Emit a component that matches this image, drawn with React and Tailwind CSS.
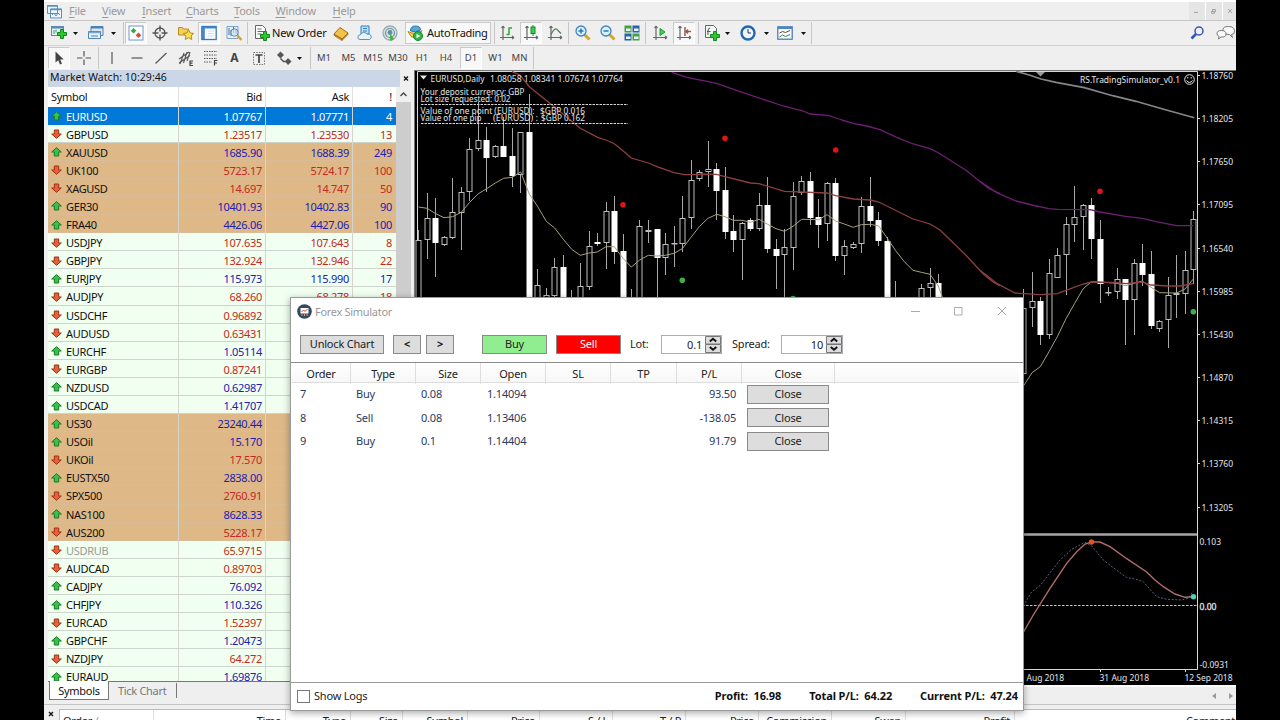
import React from "react";

const U = "#2020b0";
const D = "#c22a22";
// symbol, bid, ask, spread, direction, highlighted row
const quotes = [
  ["EURUSD", "1.07767", "1.07771", "4", 1, "sel"],
  ["GBPUSD", "1.23517", "1.23530", "13", 0, ""],
  ["XAUUSD", "1685.90", "1688.39", "249", 1, "tan"],
  ["UK100", "5723.17", "5724.17", "100", 0, "tan"],
  ["XAGUSD", "14.697", "14.747", "50", 0, "tan"],
  ["GER30", "10401.93", "10402.83", "90", 1, "tan"],
  ["FRA40", "4426.06", "4427.06", "100", 1, "tan"],
  ["USDJPY", "107.635", "107.643", "8", 0, ""],
  ["GBPJPY", "132.924", "132.946", "22", 0, ""],
  ["EURJPY", "115.973", "115.990", "17", 1, ""],
  ["AUDJPY", "68.260", "68.278", "18", 0, ""],
  ["USDCHF", "0.96892", "", "", 0, ""],
  ["AUDUSD", "0.63431", "", "", 0, ""],
  ["EURCHF", "1.05114", "", "", 1, ""],
  ["EURGBP", "0.87241", "", "", 0, ""],
  ["NZDUSD", "0.62987", "", "", 1, ""],
  ["USDCAD", "1.41707", "", "", 1, ""],
  ["US30", "23240.44", "", "", 1, "tan"],
  ["USOil", "15.170", "", "", 1, "tan"],
  ["UKOil", "17.570", "", "", 0, "tan"],
  ["EUSTX50", "2838.00", "", "", 1, "tan"],
  ["SPX500", "2760.91", "", "", 0, "tan"],
  ["NAS100", "8628.33", "", "", 1, "tan"],
  ["AUS200", "5228.17", "", "", 0, "tan"],
  ["USDRUB", "65.9715", "", "", 0, "off"],
  ["AUDCAD", "0.89703", "", "", 0, ""],
  ["CADJPY", "76.092", "", "", 1, ""],
  ["CHFJPY", "110.326", "", "", 1, ""],
  ["EURCAD", "1.52397", "", "", 0, ""],
  ["GBPCHF", "1.20473", "", "", 1, ""],
  ["NZDJPY", "64.272", "", "", 0, ""],
  ["EURAUD", "1.69876", "", "", 1, ""],
];

// Each pane is sampled at three units per pixel: [x, high, low, top, bottom, filled]
const panes = [
  { ox: 416, oy: 70, c: [
    [8,480,690,510,690,0],[33,368,568,444,511,0],[59,385,620,444,520,1],[84,498,528,502,524,0],[110,323,506,426,503,0],[136,350,540,366,428,0],
    [161,205,393,238,366,0],[187,95,243,210,238,0],[212,170,366,210,264,1],[238,225,264,229,260,0],[263,140,258,229,260,1],[289,173,350,258,317,1],
    [314,185,368,185,316,0],[340,72,690,185,690,1],[365,596,690,645,690,0],[391,655,690,676,690,0],[416,563,682,591,678,0],[442,556,690,590,690,1],
    [467,660,690,689,690,0],[493,580,690,649,690,0],[519,484,660,528,650,0],[544,489,528,516,521,1],[570,396,596,424,520,0],[595,378,581,424,545,1],
    [621,491,690,543,690,1],[646,657,690,689,690,0],[671,450,690,468,690,0],[697,450,520,479,486,0],[723,478,690,478,564,1],[748,488,614,523,564,0],
    [774,468,592,519,523,0],[799,378,545,445,521,0],[825,270,476,330,445,0],[850,300,332,306,328,0],[876,214,352,296,307,0]] },
  { ox: 700, oy: 120, c: [
    [50,128,301,147,212,1],[75,141,358,211,336,1],[100,285,396,334,361,1],[126,305,480,310,361,0],[151,295,332,301,328,1],[177,218,334,255,328,0],
    [203,170,398,255,386,1],[228,358,508,386,407,1],[254,328,540,382,406,0],[279,185,450,229,383,0],[305,168,226,184,220,0],[330,156,316,183,293,1],
    [356,237,384,291,315,1],[381,186,363,188,313,0],[407,174,423,188,408,1],[433,360,465,379,408,0],[460,366,388,373,385,0],[484,232,399,259,373,0],
    [511,170,320,259,302,1],[536,277,378,300,363,1],[562,352,540,362,540,1],[587,484,540,539,540,0],[664,491,540,503,540,0],[690,443,540,489,503,0],
    [715,463,540,489,540,1]] },
  { ox: 980, oy: 160, c: [
    [131,387,655,445,643,0],[156,336,500,423,445,0],[181,411,555,423,526,1],[207,296,536,340,526,0],[232,264,355,286,355,0],[258,170,404,193,286,0],
    [284,78,245,172,195,0],[309,132,270,136,172,0],[334,114,296,136,238,1],[360,180,428,237,373,1],[386,382,408,395,399,0],[411,323,417,358,395,0],
    [437,356,554,357,421,1],[462,296,524,310,421,0],[487,252,378,310,344,1],[513,273,506,343,498,1],[539,480,515,482,508,0],[565,351,563,406,481,0],
    [590,285,474,400,406,0],[615,273,462,331,401,0],[640,153,372,178,331,0]] },
];

const curves = [
  [416, 70, "#a89f7c", 1, "8,411 33,415 59,431 84,443 110,440 136,427 161,397 187,371 212,356 238,339 263,325 289,322 314,306 340,372 365,410 391,454 416,474 442,508 467,538 493,556 519,549 544,546 570,530 595,530 621,565 646,591 671,570 697,556 723,558 748,556 774,550 799,536 825,502 850,470 876,445 902,433"],
  [700, 120, "#a89f7c", 1, "50,283 75,290 100,301 126,301 151,307 177,298 203,313 228,326 254,334 279,319 305,298 356,299 381,284 407,303 433,312 460,322 484,314 511,313 536,318 562,355 587,392 613,425 639,451 664,457 690,463 715,498 728,534"],
  [980, 160, "#a89f7c", 1, "131,677 156,638 181,620 207,575 232,530 258,476 284,430 309,387 334,365 360,366 411,370 437,377 462,370 487,363 513,382 539,398 590,399 615,387 640,357"],
  [416, 70, "#8f3f42", 1.3, "288,5 312,15 340,50 420,115 493,175 545,202 570,210 595,221 621,242 646,264 697,279 723,290 774,308 805,314 876,314"],
  [700, 120, "#8f3f42", 1.3, "0,162 50,163 75,170 151,189 177,191 254,214 381,219 407,227 460,237 511,240 536,246 639,297 690,312 720,330 800,408 850,462 880,487 900,497"],
  [980, 160, "#8f3f42", 1.3, "0,331 50,370 105,399 181,404 232,401 258,391 309,372 334,366 411,368 437,371 487,366 513,375 565,378 600,378 640,371"],
  [440, 0, "#6e1f74", 1.3, "695,217 740,232 830,250 900,275 1030,318 1090,333 1110,342 1165,346 1206,360"],
  [700, 120, "#6e1f74", 1.3, "425,0 460,10 500,18 540,29 590,52 640,72 690,86 715,98 800,152 865,205 900,221"],
  [980, 160, "#6e1f74", 1.3, "0,64 50,98 105,122 155,135 207,146 232,148 330,149 360,156 437,169 487,175 539,187 590,197 640,197"],
  [836, 0, "#85858c", 1.7, "540,214 580,225 615,237 660,247 745,263 830,287 900,304 980,327 1075,353"],
];

const scaled = (ox, oy, pts) =>
  pts.split(" ").map((p) => {
    const [x, y] = p.split(",").map(Number);
    return (ox + x / 3).toFixed(1) + "," + (oy + y / 3).toFixed(1);
  }).join(" ");

function Candles() {
  return panes.flatMap(({ ox, oy, c }) =>
    c.map(([x, h, l, t, b, f]) => {
      const cx = Math.floor(ox + x / 3) + 0.5;
      const Y = (v) => Math.round(oy + v / 3);
      const bt = Y(t), bb = Math.max(Y(b), Y(t) + 1);
      return (
        <g key={ox + "-" + x}>
          <path d={`M${cx} ${Y(h)}V${bt}M${cx} ${bb}V${Math.max(Y(l), bb)}`} stroke="#a9a9a9" />
          {f ? <rect x={cx - 3} y={bt} width="6" height={bb - bt} fill="#fff" />
            : <rect x={cx - 2.5} y={bt + 0.5} width="5" height={Math.max(bb - bt - 1, 0.5)} fill="#000" stroke="#bdbdbd" />}
        </g>
      );
    })
  );
}

const Tx = ({ x, y, w, children, ...p }) => (
  <text x={x} y={y} textLength={w} lengthAdjust="spacingAndGlyphs" {...p}>{children}</text>
);

function Chart() {
  const prices = ["1.18760", "1.18205", "1.17650", "1.17095", "1.16540", "1.15985", "1.15430", "1.14870", "1.14315", "1.13760", "1.13205"];
  return (
    <svg className="block h-[615px] w-[822px] shrink-0 bg-black" viewBox="414 70 822 615" fontFamily="'Noto Sans', sans-serif" fontSize="9.8" fill="none">
      <path d="M414.5 70V685M414 70.5H1236" stroke="#777" />
      <path d="M417.5 669V71.5H1197.5V669.5H417" stroke="#d8d8d8" />
      <Candles />
      {curves.map(([ox, oy, s, w, p], i) => (
        <polyline key={i} points={scaled(ox, oy, p)} stroke={s} strokeWidth={w} />
      ))}
      <path d="M1036 72H1045L1040.500 76.500Z" fill="#999" />
      {[[623, 204.7], [725, 138.2], [835.7, 150], [1100, 191.3]].map(([x, y]) => <circle key={x} cx={x} cy={y} r="2.8" fill="#dc1616" />)}
      {[[682.3, 280.3], [793, 298.5], [1193.300, 311.7]].map(([x, y]) => <circle key={x} cx={x} cy={y} r="2.8" fill="#3fae49" />)}
      <path d="M1018 534.500H1197" stroke="#a6a6a6" strokeWidth="2.5" />
      <path d="M1018 605.500H1197" stroke="#c5c5c5" strokeDasharray="2.5 1.5" />
      <polyline points={scaled(1000, 500, "70,318 95,275 120,257 180,180 215,148 255,127 275,138 310,180 345,207 380,233 405,237 430,245 470,290 500,298 545,300 565,295 580,272")} stroke="#5b607c" strokeDasharray="2 1.6" />
      <polyline points={scaled(1000, 500, "70,397 100,345 150,265 200,190 230,155 255,132 275,126 300,126 330,140 380,176 440,216 465,240 490,260 525,282 555,292 580,290")} stroke="#b06d6c" strokeWidth="1.4" />
      <circle cx="1091.500" cy="542" r="2.7" fill="#e8511c" />
      <circle cx="1193.500" cy="596.700" r="2.700" fill="#4fd3b5" />
      <g fill="#e6e6e6">
        <path d="M420 75.500H427L423.500 79.500Z" />
        <Tx x={430.500} y={81.500} w={54}>EURUSD,Daily</Tx>
        <Tx x={490} y={81.500} w={133}>1.08058 1.08341 1.07674 1.07764</Tx>
        <Tx x={420.500} y={95} w={104}>Your deposit currency: GBP</Tx>
        <Tx x={420.500} y={101.500} w={90}>Lot size requested: 0.02</Tx>
        <Tx x={420.500} y={114} w={114}>Value of one point (EURUSD):</Tx>
        <Tx x={540} y={114} w={45}>$GBP 0.016</Tx>
        <Tx x={420.500} y={120.500} w={61}>Value of one pip</Tx>
        <Tx x={493} y={120.500} w={45}>(EURUSD) :</Tx>
        <Tx x={541} y={120.500} w={44}>$GBP 0.162</Tx>
        <Tx x={1080} y={82.500} w={100}>RS.TradingSimulator_v0.1</Tx>
        {prices.map((p, i) => <Tx key={p} x={1201.500} y={79 + i * 43.15} w={31.500}>{p}</Tx>)}
        <Tx x={1199.500} y={544.500} w={21.500}>0.103</Tx>
        <Tx x={1199.500} y={609.500} w={17} stroke="#e6e6e6" strokeWidth=".3">0.00</Tx>
        <Tx x={1199.500} y={667.500} w={29.500}>-0.0931</Tx>
        <Tx x={1026.500} y={680.500} w={37.500}>Aug 2018</Tx>
        <Tx x={1099.500} y={680.500} w={49.500}>31 Aug 2018</Tx>
        <Tx x={1184.500} y={680.500} w={48}>12 Sep 2018</Tx>
      </g>
      <path d="M421 104.500H628M421 123.500H628" stroke="#d4d4d4" strokeDasharray="2.500 1" />
      <path d={prices.map((_, i) => `M1198 ${Math.round(75 + i * 43.15) + 0.5}h2`).join("") + "M1100.500 670v2M1185.500 670v2"} stroke="#d8d8d8" />
      <g stroke="#e6e6e6"><circle cx="1189.500" cy="79.500" r="4.800" /><path d="M1186.500 80.500Q1189.500 84.500 1192.500 80.500M1187.800 77v1.500M1191.200 77v1.500" /></g>
    </svg>
  );
}

const Svg = ({ children, s = 16 }) => <svg width={s} height={s} viewBox="0 0 16 16" fill="none" className="shrink-0">{children}</svg>;
const Plus = ({ x = 6, y = 5 }) => <path transform={`translate(${x} ${y})`} d="M3.500 .5h3v3h3v3h-3v3h-3v-3h-3v-3h3z" fill="#2fc72f" stroke="#118a1a" />;
const AxesPath = () => <path d="M4 1v14M1 12.500h14M4 1 2.500 3M4 1l1.500 2M15 12.500l-2-1.500M15 12.500l-2 1.500" stroke="#666" strokeWidth="1.200" />;

const icons = {
  newChart: <Svg><rect x=".5" y="1.500" width="12" height="9" fill="#e4effa" stroke="#5a8ab8" /><path d="M.5 2.500h12" stroke="#5a8ab8" strokeWidth="2" /><path d="M3 5v4M5 4.500v3" stroke="#39a845" /><Plus x={6} y={4} /></Svg>,
  profiles: <Svg><path d="M3 1.500h12v9H3z" fill="#d7e7f6" stroke="#4f83b5" /><path d="M3 2.500h12" stroke="#4f83b5" strokeWidth="2" /><path d="M.5 6.500h12v7H.5z" fill="#e7f1fa" stroke="#4f83b5" /><path d="M.5 7.500h12M3 11h7" stroke="#7aa5cf" strokeWidth="1.500" /></Svg>,
  market: <Svg><rect x="1" y="1" width="14" height="14" fill="#fff" stroke="#6b9bcb" /><path d="M5.500 3 8.300 5.800 5.500 8.600 2.700 5.800Z" fill="#2fae3a" /><path d="M10.500 7.500 13.300 10.300 10.500 13.100 7.700 10.300Z" fill="#db4a32" /></Svg>,
  target: <Svg><circle cx="8" cy="8" r="5" stroke="#555" strokeWidth="1.300" /><path d="M8 .5v6M8 9.500v6M.5 8h6M9.500 8h6" stroke="#555" strokeWidth="1.400" /></Svg>,
  folderStar: <Svg><path d="M.5 2.500h4l1 1.500h5v6H.5z" fill="#f4cf60" stroke="#bd8b1d" /><path d="m10.500 4.500 1.700 3.500 3.500.4-2.600 2.500.7 3.600-3.300-1.800-3.200 1.800.6-3.600L5.200 8.400 9 8z" fill="#fbe14a" stroke="#b98b14" /></Svg>,
  navigator: <Svg><rect x=".8" y="1.500" width="14.400" height="13" fill="#fafdff" stroke="#3c78bd" strokeWidth="1.300" /><path d="M1 2h14v1.500H1zM1 3h2.800v11H1z" fill="#4685c9" /><path d="M7 6h6M7 8.500h6M7 11h6" stroke="#d5dfeb" /></Svg>,
  tester: <Svg><path d="M1 1.500h11v12H1z" fill="#e6f0fa" stroke="#7da3c8" /><path d="M3 3v7M5 5v6M7.500 2v6M10 4v5" stroke="#4377b0" /><circle cx="8.500" cy="7.500" r="3.700" fill="#cfe5f5aa" stroke="#6688a4" /><path d="m11.500 10.500 4 4.500" stroke="#d4a52a" strokeWidth="2.400" /></Svg>,
  order: <Svg><path d="M1.500.5h7l3 3v10h-10z" fill="#fff" stroke="#666" /><path d="M3.500 4h4M3.500 6.500h6M3.500 9h4" stroke="#666" /><Plus x={6} y={6} /></Svg>,
  book: <Svg><path d="m1 9 6-6.500 8 5.500-6 6z" fill="#f2c24a" stroke="#a36a12" /><path d="m1 9 8 5v1.500L1 10.500zM9 14l6-6v1.500l-6 6z" fill="#d18a1d" stroke="#9b6514" strokeWidth=".6" /></Svg>,
  server: <Svg><path d="M4 1h8v8H4z" fill="#bfe0f8" stroke="#2f7ec4" /><path d="M6 3.500h4M6 6h4" stroke="#2f7ec4" /><path d="M3 14.500a2.300 2.300 0 0 1 .3-4.600 4 4 0 0 1 7-.6 2.800 2.800 0 1 1 2.200 5.200z" fill="#e8f2fa" stroke="#5b8fc4" /></Svg>,
  radar: <Svg><circle cx="8" cy="8" r="7" stroke="#9ab0b4" strokeWidth="1.300" fill="#d5dfe0" /><circle cx="8" cy="8" r="4.500" stroke="#79969b" strokeWidth="1.200" /><circle cx="8" cy="7.500" r="2.400" fill="#5c8fae" /><path d="M8 8v8a7.500 7.500 0 0 0 4-2z" fill="#45b24e" /></Svg>,
  auto: <Svg><path d="M1 6.500q7 4 14-1l-3 6q-4 3-8 0z" fill="#f3cb4c" stroke="#b88b1d" /><path d="M3.500 6q0-5 5-5t5 4q-5 3-10 1z" fill="#58a9d8" stroke="#2b79aa" /><circle cx="11" cy="11" r="4.500" fill="#2eb544" stroke="#14882a" /><path d="m9.500 8.800 3.800 2.200-3.800 2.200z" fill="#fff" /></Svg>,
  bars: <Svg><AxesPath /><path d="M10 2.500v7.500M10 3h3M7.500 9.500H10" stroke="#2ca83a" strokeWidth="1.500" /></Svg>,
  candle: <Svg><AxesPath /><path d="M10 0v11" stroke="#178a28" /><rect x="8" y="2" width="4" height="6.500" fill="#37d04b" stroke="#178a28" /></Svg>,
  line: <Svg><AxesPath /><path d="M4 9.500Q8 1 11 5.500L14 8.500" stroke="#4c7c55" strokeWidth="1.200" /></Svg>,
  zoomIn: <Svg><path d="m9.500 9.500 5 5" stroke="#d6a62b" strokeWidth="3" /><circle cx="6" cy="6" r="5" fill="#d8effc" stroke="#3b86c6" strokeWidth="1.300" /><path d="M3.500 6h5M6 3.500v5" stroke="#2f73b5" strokeWidth="1.500" /></Svg>,
  zoomOut: <Svg><path d="m9.500 9.500 5 5" stroke="#d6a62b" strokeWidth="3" /><circle cx="6" cy="6" r="5" fill="#d8effc" stroke="#3b86c6" strokeWidth="1.300" /><path d="M3.500 6h5" stroke="#2f73b5" strokeWidth="1.500" /></Svg>,
  tiles: <Svg><path d="M.5.500h7v7h-7zM8.500 8.500h7v7h-7z" fill="#43a047" /><path d="M8.500.500h7v7h-7zM.5 8.500h7v7h-7z" fill="#2b62ae" /><path d="M2 3.500h4.500v2.500H2zM10 3.500h4.500v2.500H10zM2 11.500h4.500V14H2zM10 11.500h4.500V14H10z" fill="#e8f4f4" /></Svg>,
  scroll: <Svg><AxesPath /><path d="m8 3.500 5 3.500-5 3.500z" fill="#45d052" stroke="#1c9a2d" /></Svg>,
  shift: <Svg><AxesPath /><path d="M9 2v9" stroke="#555" strokeWidth="1.300" /><path d="M15 6.500h-5M12 4.500l-2 2 2 2" stroke="#bf4b28" strokeWidth="1.400" /></Svg>,
  indicators: <Svg><path d="M1.500.5h8l3 3v9h-11z" fill="#f2f6f2" stroke="#666" /><path d="M6 3q-2 0-2 3v4M3 6.500h3.500" stroke="#555" /><Plus x={6} y={6} /></Svg>,
  clock: <Svg><circle cx="8" cy="8" r="6.500" fill="#eef6fd" stroke="#2566b0" strokeWidth="2.400" /><path d="M8 4v4h3" stroke="#334" /></Svg>,
  template: <Svg><rect x=".8" y="1.800" width="14.400" height="12.400" fill="#f8fbff" stroke="#3c74b2" strokeWidth="1.200" /><path d="M1 3h14" stroke="#4c86c6" strokeWidth="2" /><path d="m2.500 8 3-1.500 3 1 4.500-2" stroke="#7a4434" /><path d="m2.500 12 3-2 3 1.500 4.500-2" stroke="#3a8a48" /></Svg>,
  search: <Svg><circle cx="10" cy="6" r="4" fill="#eef2fc" stroke="#3556b4" strokeWidth="1.500" /><path d="m7 9-4.500 4.500" stroke="#3556b4" strokeWidth="2.600" /></Svg>,
  cursor: <Svg><path d="M4.500 1.500v11l2.700-2.300 1.800 4.300 2-.9-1.900-4.100h3.600z" fill="#444" /></Svg>,
  cross: <Svg><path d="M8 1v5.500M8 9.500V15M1 8h5.500M9.500 8H15" stroke="#555" strokeWidth="1.200" /></Svg>,
  vline: <Svg><path d="M8 2v12" stroke="#555" strokeWidth="1.200" /></Svg>,
  hline: <Svg><path d="M2.500 8h11" stroke="#555" strokeWidth="1.200" /></Svg>,
  trend: <Svg><path d="M2.500 13.500l11-10.500" stroke="#555" strokeWidth="1.200" /></Svg>,
  channel: <Svg><path d="M1 9 11 2M1 13 12 5.500M2 14 6 3M5.500 13 9 2M9 11l3-9" stroke="#555" strokeWidth="1.100" /><path d="M15 11h-3v4.500h3M12 13.200h2.500" stroke="#444" strokeWidth="1.200" /></Svg>,
  fibo: <Svg><path d="M1 1.500h13M1 5h13M1 8.500h13M1 12h8" stroke="#555" strokeDasharray="1.500 1" /><path d="M14.500 10.500h-3v5M11.500 13h2.500" stroke="#444" strokeWidth="1.200" /></Svg>,
  label: <Svg><rect x="2.500" y="2.500" width="11" height="12" stroke="#777" strokeDasharray="1.500 1.200" /><path d="M4.500 5h7M8 5v8" stroke="#444" strokeWidth="1.700" /></Svg>,
  arrows: <Svg><path d="M4.500 1.500 8 5 4.500 8.500 1 5z" fill="#555" /><path d="m4.500 8.500 3 3h3" stroke="#555" strokeWidth="1.500" /><path d="M12 8l3.500 3.500L12 15l-3-3.500z" fill="#555" /></Svg>,
};

const Cell = ({ w, n, on, children }) => (
  <div className={`${w} flex shrink-0 items-center justify-center ${on ? "h-[22px] border border-[#c9c9c9] border-r-white border-b-white bg-[#f8f8f8]" : "h-full"}`}>{n ? icons[n] : children}</div>
);
const Caret = ({ w }) => (
  <div className={`${w} flex shrink-0 justify-center`}><svg width="5" height="3" viewBox="0 0 5 3" className="shrink-0"><path d="M0 0h5L2.500 3z" fill="#111" /></svg></div>
);
const Sep = () => <div className="h-[22px] w-px shrink-0 bg-[#c6c6c6]" />;

function Toolbars() {
  return (
    <>
      <div className="flex h-[25px] items-center border-b border-[#d2d2d2] pl-[4px] text-[11px] text-[#111]">
        <Cell w="w-[22px]" n="newChart" /><Caret w="w-[11px]" /><Cell w="w-[29px]" n="profiles" /><Caret w="w-[6px]" />
        <div className="w-[7px]" /><Sep /><div className="w-px" /><Cell w="w-[22px]" n="market" on /><Cell w="w-[26px]" n="target" /><Cell w="w-[25px]" n="folderStar" />
        <Cell w="w-[22px]" n="navigator" on /><Cell w="w-[27px]" n="tester" /><Sep /><div className="w-[4px]" />
        <Cell w="w-[20px]" n="order" /><span className="w-[58px] shrink-0 whitespace-nowrap tracking-[-0.2px]">New Order</span>
        <Cell w="w-[22px]" n="book" /><Cell w="w-[26px]" n="server" /><Cell w="w-[24px]" n="radar" /><div className="w-[3px]" />
        <div className="flex h-[22px] w-[86px] shrink-0 items-center gap-[4px] border border-[#c9c9c9] bg-[#f8f8f8] pl-[1px]">{icons.auto}<span className="whitespace-nowrap tracking-[-0.28px]">AutoTrading</span></div>
        <div className="w-[3px]" /><Sep /><Cell w="w-[24px]" n="bars" /><div className="w-px" /><Cell w="w-[22px]" n="candle" on /><Cell w="w-[26px]" n="line" /><Sep />
        <Cell w="w-[27px]" n="zoomIn" /><Cell w="w-[23px]" n="zoomOut" /><Cell w="w-[25px]" n="tiles" /><div className="w-px" /><Sep /><div className="w-px" /><Cell w="w-[26px]" n="scroll" />
        <Cell w="w-[22px]" n="shift" on /><div className="w-[3px]" /><Sep /><Cell w="w-[25px]" n="indicators" /><Caret w="w-[7px]" />
        <Cell w="w-[34px]" n="clock" /><Caret w="w-[2px]" /><Cell w="w-[36px]" n="template" /><Caret w="w-[1px]" /><div className="w-[7px]" /><Sep />
        <div className="ml-auto flex w-[47px] shrink-0 items-center gap-[11px]">
          {icons.search}
          <svg width="20" height="16" viewBox="0 0 20 16" fill="#fafafa" stroke="#777" className="shrink-0"><path d="M7 4.500Q7 1.500 12.500 1.500T18.500 5.500 15.500 9.500l1 3-3-3Q7 9.500 7 4.500Z" /><path d="M1 8.500Q1 5.500 5.500 5.500T10 9t-5 3l-2.500 2 .5-2.500Q1 10.500 1 8.500Z" /></svg>
        </div>
      </div>
      <div className="flex h-[24px] items-center pl-[4px] text-[9.500px] text-[#444]">
        <Cell w="w-[22px]" n="cursor" on /><Cell w="w-[28px]" n="cross" /><Sep /><Cell w="w-[25px]" n="vline" /><Cell w="w-[25px]" n="hline" />
        <Cell w="w-[24px]" n="trend" /><Cell w="w-[25px]" n="channel" /><Cell w="w-[25px]" n="fibo" /><Cell w="w-[23px]"><b className="text-[12px] text-[#444]">A</b></Cell>
        <Cell w="w-[25px]" n="label" /><Cell w="w-[26px]" n="arrows" /><Caret w="w-[5px]" /><div className="w-[8px]" /><Sep />
        <Cell w="w-[26px]">M1</Cell><Cell w="w-[23px]">M5</Cell><Cell w="w-[26px]">M15</Cell><Cell w="w-[24px]">M30</Cell><Cell w="w-[24px]">H1</Cell>
        <Cell w="w-[24px]">H4</Cell><div className="w-[2px]" /><Cell w="w-[22px]" on>D1</Cell><Cell w="w-[27px]">W1</Cell><Cell w="w-[21px]">MN</Cell><div className="w-[3px]" /><Sep />
      </div>
    </>
  );
}

const Arrow = ({ up }) => (
  <svg width="11" height="10" viewBox="0 0 11 10" className="shrink-0">
    <path d={up ? "M5.500.700 10.300 5H7.700V9H3.300V5H.7Z" : "M5.500 9.300 10.300 5H7.700V1H3.300V5H.7Z"} fill={up ? "#38c048" : "#ea5f35"} stroke={up ? "#187a28" : "#9c3318"} />
  </svg>
);

const cols = "grid grid-cols-[131px_87px_87px_43px]";
function MarketWatch() {
  const tone = { sel: "bg-[#0078d7] border-[#0078d7]", tan: "bg-[#deb887] border-[#d9bb98]", "": "bg-[#f0fff0] border-[#ccd4cc]", off: "bg-[#f0fff0] border-[#ccd4cc]" };
  return (
    <div className="flex w-[370px] shrink-0 flex-col pl-[4px] text-[11px] tracking-[-0.3px] text-[#111]">
      <div className="flex h-[17px] w-[364px] items-center justify-between bg-[#cbd7e6] pb-px pl-[2px] text-[10.500px] tracking-[0.05px]"><span>Market Watch: 10:29:46</span>
        <svg width="12" height="17" viewBox="0 0 12 17" className="bg-[#efefef]"><path d="m4 6.500 4 4m0-4-4 4" stroke="#111" strokeWidth="1.300" /></svg></div>
      <div className="flex h-[594px] overflow-hidden">
        <div className="w-[348px] shrink-0">
          <div className={`${cols} h-[19.500px] bg-white leading-[19px]`}>
            <span className="border-r border-[#e0e0e0] pl-[3px]">Symbol</span><span className="border-r border-[#e0e0e0] pr-[3px] text-right">Bid</span>
            <span className="border-r border-[#e0e0e0] pr-[3px] text-right">Ask</span><span className="pr-[4px] text-right">!</span>
          </div>
          {quotes.map(([s, bid, ask, sp, up, t]) => {
            const c = t === "sel" ? "#fff" : up ? U : D;
            return (
              <div key={s} className={`${cols} h-[18.100px] border-b leading-[19px] ${tone[t]}`}>
                <span className="flex items-center gap-[4px] border-r border-[#d5d5cc] pl-[3px]"><Arrow up={up} /><span className={t === "sel" ? "text-white" : t === "off" ? "text-[#999]" : "text-[#111]"}>{s}</span></span>
                <span className="border-r border-[#d5d5cc] pr-[3px] text-right" style={{ color: c }}>{bid}</span>
                <span className="border-r border-[#d5d5cc] pr-[3px] text-right" style={{ color: c }}>{ask}</span>
                <span className="pr-[4px] text-right" style={{ color: c }}>{sp}</span>
              </div>
            );
          })}
        </div>
        <div className="w-[15px] bg-[#f0f0f0]"><svg width="15" height="15" viewBox="0 0 15 15" fill="none"><path d="m4.500 9 3-3 3 3" stroke="#444" strokeWidth="1.300" /></svg><div className="h-[360px] w-[15px] bg-[#cdcdcd]" /></div>
      </div>
      <div className="flex h-[23px] border-t border-[#777]">
        <div className="-mt-px ml-[1px] h-[19px] w-[60px] border border-t-0 border-[#777] bg-white text-center leading-[19px]">Symbols</div>
        <div className="mt-[1px] h-[15px] w-[68px] border-r border-[#777] pl-[9px] leading-[15px] text-[#777]">Tick Chart</div>
      </div>
    </div>
  );
}

const Btn = ({ cls, children }) => <button className={`${cls} flex h-[19px] shrink-0 items-center justify-center border border-[#8a8a8a]`}>{children}</button>;
const Spin = ({ w, v }) => (
  <div className={`${w} flex h-[19px] shrink-0 border border-[#abadb3] bg-white`}>
    <span className="flex-1 pr-[3px] text-right leading-[18px]">{v}</span>
    <svg width="16" height="17" viewBox="0 0 16 17"><path d="M.5.500h15v7.500h-15zM.5 8.500h15v8h-15z" fill="#ddd" stroke="#777" /><path d="M4.800 5.500 8 2.800l3.200 2.700M4.800 11 8 13.700l3.200-2.700" fill="none" stroke="#111" strokeWidth="2" /></svg>
  </div>
);

const grid = "grid grid-cols-[59px_65px_65px_65px_65px_66px_65px_93px_1fr]";
function Simulator() {
  const rows = [["7", "Buy", "0.08", "1.14094", "93.50"], ["8", "Sell", "0.08", "1.13406", "-138.05"], ["9", "Buy", "0.1", "1.14404", "91.79"]];
  return (
    <div className="absolute top-[297px] left-[290px] flex h-[414px] w-[734px] flex-col border border-[#9a9a9a] bg-white text-[11px] tracking-[-0.2px] text-[#222] shadow-[0_2px_7px_rgba(0,0,0,0.35)]">
      <div className="flex h-[28px] shrink-0 items-center pl-[6px] text-[#999]">
        <svg width="15" height="15" viewBox="0 0 15 15" className="mr-[3px] mb-px"><circle cx="7.500" cy="7.500" r="7.300" fill="#34495e" /><path d="M3.500 4h8v5.500h-8z" fill="#fff" /><path d="m4.500 8 2-2 1.500 1.500 2.500-2.500" stroke="#d8432b" fill="none" /><path d="M5 10v2M7.500 10v2M10 10v2" stroke="#dc9b72" /></svg>
        <span className="tracking-[-0.3px]">Forex Simulator</span>
        <svg width="100" height="12" viewBox="0 0 100 12" fill="none" stroke="#aaa" className="mr-[13px] mb-[2px] ml-auto"><path d="M1 6.500h9M44.500 2.500h7.500v7.500h-7.500zM88 2l8 8M96 2l-8 8" /></svg>
      </div>
      <div className="flex h-[37px] shrink-0 items-center border-b border-[#8a8a8a] pl-[9px] whitespace-nowrap">
        <Btn cls="w-[84px] bg-[#ddd]">Unlock Chart</Btn><Btn cls="ml-[9px] w-[28px] bg-[#ddd]"><b>&lt;</b></Btn><Btn cls="ml-[5px] w-[28px] bg-[#ddd]"><b>&gt;</b></Btn>
        <Btn cls="ml-[28px] w-[65px] bg-[#90ee90]">Buy</Btn><Btn cls="ml-[9px] w-[65px] bg-[#ff0000] text-white">Sell</Btn>
        <span className="ml-[9px] w-[31px] shrink-0">Lot:</span><Spin w="w-[61px]" v="0.1" />
        <span className="ml-[10px] w-[49px] shrink-0">Spread:</span><Spin w="w-[62px]" v="10" />
      </div>
      <div className="flex-1 pl-[1px]">
        <div className={`${grid} mr-[4px] h-[20px] border-b border-[#dcdcdc] bg-gradient-to-b from-white to-[#f7f7f7] text-center leading-[21px]`}>
          {["Order", "Type", "Size", "Open", "SL", "TP", "P/L", "Close"].map((h) => <span key={h} className="border-r border-[#dedede]">{h}</span>)}
        </div>
        {rows.map(([o, t, s, p, pl]) => (
          <div key={o} className={`${grid} h-[23.300px] items-center text-[#2c3a5e]`}>
            <span className="pl-[8px]">{o}</span><span className="pl-[5px]">{t}</span><span className="pl-[5px]">{s}</span><span className="pl-[6px]">{p}</span><span /><span />
            <span className="pr-[6px] text-right">{pl}</span><div className="pl-[5px] text-[#222]"><Btn cls="w-[82px] bg-[#ddd]">Close</Btn></div>
          </div>
        ))}
      </div>
      <div className="flex h-[28px] shrink-0 items-center border-t border-[#9a9a9a] pr-[5px] pl-[6px]">
        <div className="mr-[4px] h-[13px] w-[13px] border border-[#777] bg-white" /><span>Show Logs</span>
        <div className="ml-auto flex gap-[28px] font-bold tracking-[-0.1px] whitespace-nowrap text-[#111]"><span>Profit:&nbsp; 16.98</span><span>Total P/L:&nbsp; 64.22</span><span>Current P/L:&nbsp; 47.24</span></div>
      </div>
    </div>
  );
}

const Col = ({ w, children }) => <span className={`${w} shrink-0 border-r border-[#ddd] pr-[4px] text-right`}>{children}</span>;

export default function App() {
  return (
    <div className="relative h-[720px] w-[1280px] overflow-hidden bg-black px-[44px] font-['Noto_Sans',sans-serif]">
      <div className="flex h-[720px] w-[1192px] flex-col overflow-hidden border-t-2 border-white bg-[#efefef]">
        <div className="flex h-[19px] shrink-0 items-center border-b border-[#c6c6c6] pl-[3px] text-[11px] tracking-[-0.2px] text-[#999]">
          <svg width="15" height="15" viewBox="0 0 15 15" fill="#eef5fc" stroke="#5d8fc0" className="mr-[7px]"><path d="M.5 1.500h10v8H.5zM3.500 5h11v9h-11z" /><path d="M.5 2h10M3.500 5.500h11" strokeWidth="1.500" /><path d="m5 11 2-2 2 3 2-3 2 2" fill="none" /></svg>
          {[["File", "w-[33px]"], ["View", "w-[40px]"], ["Insert", "w-[44px]"], ["Charts", "w-[48px]"], ["Tools", "w-[41.500px]"], ["Window", "w-[57px]"], ["Help", "w-[40px]"]].map(([m, w]) => (
            <span key={m} className={`${w} shrink-0`}><u className="underline-offset-2">{m[0]}</u>{m.slice(1)}</span>
          ))}
          <div className="ml-auto flex h-full gap-px">
            {["M5.500 10.500h4", "M6 9.500h3v2H6zM7 9V7.500h3v2.500", "m5.500 7 4 4m0-4-4 4"].map((d) => (
              <svg key={d} width="17" height="18" viewBox="0 0 17 18" fill="none" stroke="#999" className="-mr-[1px] border-r border-white bg-[#e5e5e5] last:-mr-[4px]"><path d={d} /></svg>
            ))}
          </div>
        </div>
        <div className="shrink-0"><Toolbars /></div>
        <div className="flex h-[634px] shrink-0">
          <MarketWatch />
          <div className="flex w-[822px] flex-col">
            <Chart />
            <div className="flex h-[19px] items-center justify-end gap-[13px] border-t-2 border-white pr-[3px]">
              <svg width="4" height="6" viewBox="0 0 4 6"><path d="M4 0v6L0 3z" fill="#999" /></svg><svg width="4" height="6" viewBox="0 0 4 6"><path d="M0 0v6l4-3z" fill="#999" /></svg>
            </div>
          </div>
        </div>
        <div className="flex h-[16px] shrink-0 border-t border-[#c4c4c4] pt-[4px]">
          <svg width="15" height="12" viewBox="0 0 15 12" className="shrink-0"><path d="m5 3 4 4m0-4-4 4" stroke="#111" strokeWidth="1.300" /></svg>
          <div className="flex h-[20px] w-[1177px] overflow-hidden border-t border-l border-[#bbb] bg-white text-[11px] leading-[21px] tracking-[-0.3px] whitespace-nowrap text-[#222]">
            <span className="w-[94px] shrink-0 border-r border-[#ddd] pl-[3px]">Order <span className="text-[#999]">/</span></span>
            <Col w="w-[132px]">Time</Col><Col w="w-[65px]">Type</Col><Col w="w-[52px]">Size</Col><Col w="w-[65px]">Symbol</Col><Col w="w-[72px]">Price</Col><Col w="w-[73px]">S / L</Col>
            <Col w="w-[73px]">T / P</Col><Col w="w-[73px]">Price</Col><Col w="w-[73px]">Commission</Col><Col w="w-[74px]">Swap</Col><Col w="w-[109px]">Profit</Col>
            <span className="flex-1 pr-[1px] text-right">Comment</span>
          </div>
        </div>
      </div>
      <Simulator />
    </div>
  );
}
